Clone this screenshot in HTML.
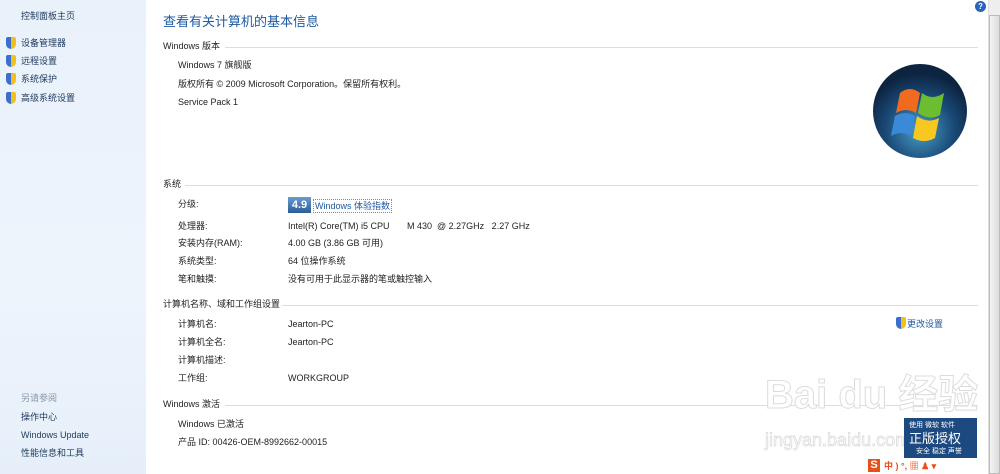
<!DOCTYPE html>
<html><head><meta charset="utf-8"><style>
*{margin:0;padding:0;box-sizing:border-box}
body{width:1000px;height:474px;overflow:hidden;background:#fff;font-family:"Liberation Sans","Noto Sans CJK SC",sans-serif;font-size:9px;color:#222;position:relative}
.side{position:absolute;left:0;top:0;width:146px;height:474px;background:linear-gradient(#e9f1fb,#eef4fc 60%,#e6eff9)}
.t{position:absolute;white-space:nowrap;line-height:12px}
.nav{color:#1e395b}
.shield{position:absolute;width:10px;height:12px;border-radius:2px 2px 5px 5px;background:linear-gradient(90deg,#3a6fd0 50%,#f0c020 50%)}
.hdr{position:absolute;left:163px;right:22px;height:1px;background:#d8e0e6}
.lnk{color:#1e5aa0}
</style></head><body>
<div class="side"></div>
<div class="t nav" style="left:21px;top:10px">控制面板主页</div>
<div class="shield" style="left:6px;top:37px"></div><div class="t nav" style="left:21px;top:37px">设备管理器</div>
<div class="shield" style="left:6px;top:55px"></div><div class="t nav" style="left:21px;top:55px">远程设置</div>
<div class="shield" style="left:6px;top:73px"></div><div class="t nav" style="left:21px;top:73px">系统保护</div>
<div class="shield" style="left:6px;top:92px"></div><div class="t nav" style="left:21px;top:92px">高级系统设置</div>
<div class="t" style="left:21px;top:392px;color:#8a96a8">另请参阅</div>
<div class="t nav" style="left:21px;top:411px">操作中心</div>
<div class="t nav" style="left:21px;top:429px">Windows Update</div>
<div class="t nav" style="left:21px;top:447px">性能信息和工具</div>

<div class="t" style="left:163px;top:13px;font-size:13px;line-height:17px;color:#1e5aa0">查看有关计算机的基本信息</div>

<div class="t" style="left:163px;top:40px">Windows 版本</div><div class="hdr" style="left:225px;top:47px"></div>
<div class="t" style="left:178px;top:59px">Windows 7 旗舰版</div>
<div class="t" style="left:178px;top:78px">版权所有 © 2009 Microsoft Corporation。保留所有权利。</div>
<div class="t" style="left:178px;top:96px">Service Pack 1</div>

<svg style="position:absolute;left:872px;top:63px" width="100" height="100" viewBox="0 0 100 100">
<defs><radialGradient id="g" cx="50%" cy="70%" r="60%"><stop offset="0" stop-color="#4aa0c8"/><stop offset=".6" stop-color="#1a4a78"/><stop offset="1" stop-color="#0d2440"/></radialGradient></defs>
<circle cx="48" cy="48" r="47" fill="url(#g)"/>
<path d="M28 30 Q38 22 48 30 L44 50 Q34 44 24 50Z" fill="#f06a20"/>
<path d="M50 30 Q60 38 72 30 L68 52 Q58 58 46 50Z" fill="#6cbe30"/>
<path d="M23 53 Q33 47 43 53 L39 73 Q29 67 19 73Z" fill="#3a8ad8"/>
<path d="M45 53 Q56 61 67 55 L63 75 Q52 81 41 75Z" fill="#f8c820"/>
</svg>

<div class="t" style="left:163px;top:178px">系统</div><div class="hdr" style="left:185px;top:185px"></div>
<div class="t" style="left:178px;top:198px">分级:</div>
<div style="position:absolute;left:288px;top:197px;width:23px;height:16px;background:linear-gradient(#6a9cd0,#2a5c98);color:#fff;font-weight:bold;font-size:11px;line-height:16px;text-align:center">4.9</div>
<div class="t lnk" style="left:313px;top:199px;border:1px dotted #888;padding:0 1px">Windows 体验指数</div>
<div class="t" style="left:178px;top:220px">处理器:</div><div class="t" style="left:288px;top:220px">Intel(R) Core(TM) i5 CPU&nbsp;&nbsp;&nbsp;&nbsp;&nbsp;&nbsp;&nbsp;M 430&nbsp; @ 2.27GHz&nbsp;&nbsp;&nbsp;2.27 GHz</div>
<div class="t" style="left:178px;top:237px">安装内存(RAM):</div><div class="t" style="left:288px;top:237px">4.00 GB (3.86 GB 可用)</div>
<div class="t" style="left:178px;top:255px">系统类型:</div><div class="t" style="left:288px;top:255px">64 位操作系统</div>
<div class="t" style="left:178px;top:273px">笔和触摸:</div><div class="t" style="left:288px;top:273px">没有可用于此显示器的笔或触控输入</div>

<div class="t" style="left:163px;top:298px">计算机名称、域和工作组设置</div><div class="hdr" style="left:282px;top:305px"></div>
<div class="t" style="left:178px;top:318px">计算机名:</div><div class="t" style="left:288px;top:318px">Jearton-PC</div>
<div class="shield" style="left:896px;top:317px"></div><div class="t lnk" style="left:907px;top:318px">更改设置</div>
<div class="t" style="left:178px;top:336px">计算机全名:</div><div class="t" style="left:288px;top:336px">Jearton-PC</div>
<div class="t" style="left:178px;top:354px">计算机描述:</div>
<div class="t" style="left:178px;top:372px">工作组:</div><div class="t" style="left:288px;top:372px">WORKGROUP</div>

<div class="t" style="left:163px;top:398px">Windows 激活</div><div class="hdr" style="left:225px;top:405px"></div>
<div class="t" style="left:178px;top:418px">Windows 已激活</div>
<div class="t" style="left:178px;top:436px">产品 ID: 00426-OEM-8992662-00015</div>

<div class="t" style="left:765px;top:375px;font-size:40px;line-height:40px;color:#fff;font-weight:bold;-webkit-text-stroke:1px #dcdcdc">Bai du 经验</div>
<div class="t" style="left:765px;top:430px;font-size:18px;line-height:20px;color:#fff;-webkit-text-stroke:0.7px #d8d8d8">jingyan.baidu.com</div>
<div style="position:absolute;left:904px;top:418px;width:73px;height:40px;background:#1c4a80;color:#fff"><div class="t" style="left:5px;top:2px;font-size:7px">使用 微软 软件</div><div class="t" style="left:5px;top:14px;font-size:13px;line-height:14px">正版授权</div><div class="t" style="left:12px;top:29px;font-size:7px;line-height:9px">安全 稳定 声誉</div></div>
<div style="position:absolute;left:866px;top:458px;width:122px;height:16px;background:#fff"></div>
<div style="position:absolute;left:868px;top:459px;width:12px;height:13px;background:#e8501a;color:#fff;font-weight:bold;font-size:11px;text-align:center;line-height:13px">S</div>
<div class="t" style="left:884px;top:460px;color:#e8501a;font-weight:bold">中 ) °, ▦ ♟ ▾</div>

<div style="position:absolute;left:988px;top:0;width:12px;height:474px;background:#eee;border-left:1px solid #ddd"></div>
<div style="position:absolute;left:989px;top:15px;width:11px;height:459px;background:linear-gradient(90deg,#f4f4f4,#dcdcdc);border:1px solid #bbb"></div>
<div style="position:absolute;left:975px;top:1px;width:11px;height:11px;border-radius:50%;background:#2a62c0;color:#fff;font-size:8px;font-weight:bold;text-align:center;line-height:11px">?</div>
</body></html>
